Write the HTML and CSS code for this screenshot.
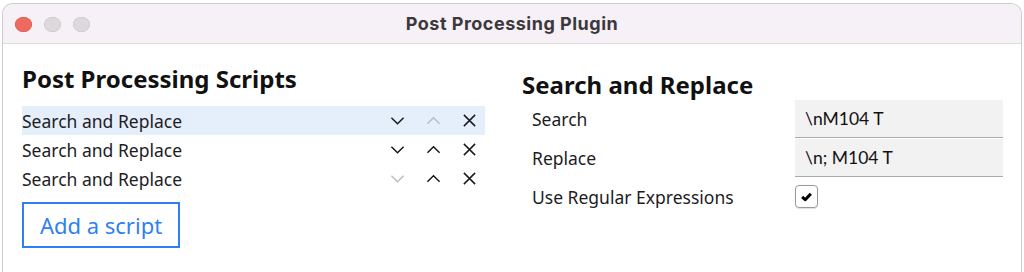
FILE: index.html
```html
<!DOCTYPE html>
<html>
<head>
<meta charset="utf-8">
<link rel="stylesheet" href="styles.css">
</head>
<body>
<div class="window">
  <div class="titlebar">
    <div class="lights">
      <span class="light red"></span>
      <span class="light"></span>
      <span class="light"></span>
    </div>
    <div class="title">Post Processing Plugin</div>
  </div>
  <div class="content">
    <div class="left">
      <h2 class="heading">Post Processing Scripts</h2>
      <div class="list">
        <div class="row selected">
          <span class="name">Search and Replace</span>
          <span class="actions">
            <svg class="ic" viewBox="0 0 16 16"><path d="M1.5 5l6.5 6.5 6.5-6.5"/></svg>
            <svg class="ic dis" viewBox="0 0 16 16"><path d="M1.5 11.5l6.5-6.5 6.5 6.5"/></svg>
            <svg class="ic" viewBox="0 0 16 16"><path d="M2 2l12 12M14 2L2 14"/></svg>
          </span>
        </div>
        <div class="row">
          <span class="name">Search and Replace</span>
          <span class="actions">
            <svg class="ic" viewBox="0 0 16 16"><path d="M1.5 5l6.5 6.5 6.5-6.5"/></svg>
            <svg class="ic" viewBox="0 0 16 16"><path d="M1.5 11.5l6.5-6.5 6.5 6.5"/></svg>
            <svg class="ic" viewBox="0 0 16 16"><path d="M2 2l12 12M14 2L2 14"/></svg>
          </span>
        </div>
        <div class="row">
          <span class="name">Search and Replace</span>
          <span class="actions">
            <svg class="ic dis" viewBox="0 0 16 16"><path d="M1.5 5l6.5 6.5 6.5-6.5"/></svg>
            <svg class="ic" viewBox="0 0 16 16"><path d="M1.5 11.5l6.5-6.5 6.5 6.5"/></svg>
            <svg class="ic" viewBox="0 0 16 16"><path d="M2 2l12 12M14 2L2 14"/></svg>
          </span>
        </div>
      </div>
      <button class="add">Add a script</button>
    </div>
    <div class="right">
      <h2 class="heading">Search and Replace</h2>
      <div class="form">
        <div class="field">
          <span class="label">Search</span>
          <div class="input">\nM104 T</div>
        </div>
        <div class="field">
          <span class="label">Replace</span>
          <div class="input">\n; M104 T</div>
        </div>
        <div class="field check-field">
          <span class="label">Use Regular Expressions</span>
          <span class="checkbox">
            <svg viewBox="0 0 12 12"><path d="M2 6.4l2.8 2.6 5.2-5.6"/></svg>
          </span>
        </div>
      </div>
    </div>
  </div>
</div>
</body>
</html>
```

FILE: styles.css
```css
html, body {
  margin: 0;
  padding: 0;
  background: #ffffff;
}
body {
  height: 272px;
  overflow: hidden;
  font-family: "Noto Sans", "Open Sans", sans-serif;
  color: #1d1d1f;
}
.window {
  margin: 3px 2px 0 2px;
  height: 269px;
  border: 1px solid #cfcbcf;
  border-bottom: none;
  border-radius: 11px 11px 0 0;
  overflow: hidden;
  background: #ffffff;
}
.titlebar {
  position: relative;
  height: 39px;
  background: #f6f1f6;
  border-bottom: 1px solid #dedade;
  display: flex;
  align-items: center;
  justify-content: center;
}
.lights {
  position: absolute;
  left: 12px;
  top: 13px;
  display: flex;
  gap: 12px;
}
.light {
  width: 17px;
  height: 15px;
  border-radius: 50%;
  background: #dcd8dc;
  box-shadow: inset 0 0 0 0.5px #c6c2c6;
}
.light.red {
  background: #ee6a5e;
  box-shadow: inset 0 0 0 0.5px #d9574c;
}
.title {
  font-family: "Inter", "Roboto", sans-serif;
  font-weight: 700;
  font-size: 18px;
  letter-spacing: 0.5px;
  color: #3c383c;
}
.content {
  display: grid;
  grid-template-columns: 463px 481px;
  column-gap: 37px;
  padding: 20px 0 0 19px;
}
.heading {
  margin: 0;
  font-size: 24px;
  font-weight: 700;
  line-height: 30px;
  color: #111;
}
.list {
  margin-top: 12px;
}
.row {
  height: 29px;
  display: flex;
  align-items: center;
  justify-content: space-between;
  font-size: 17.5px;
}
.row.selected {
  background: #e5eefb;
}
.actions {
  display: flex;
  gap: 21px;
  padding-right: 8px;
}
.ic {
  width: 15px;
  height: 15px;
  fill: none;
  stroke: #1a1a1a;
  stroke-width: 1.6;
}
.ic.dis {
  stroke: #bdbdbd;
}
.add {
  margin-top: 9px;
  height: 46px;
  width: 158px;
  background: #fff;
  border: 2px solid #2f7ff5;
  color: #2f7ff5;
  font-family: "Noto Sans", "Open Sans", sans-serif;
  font-size: 22px;
  padding: 0;
}
.right .heading {
  margin-top: 6px;
}
.form {
  padding-left: 10px;
  display: flex;
  flex-direction: column;
  gap: 1px;
}
.field {
  display: flex;
  align-items: center;
  height: 38px;
}
.label {
  width: 263px;
  font-size: 17.5px;
}
.input {
  box-sizing: border-box;
  width: 208px;
  height: 38px;
  background: #f2f2f2;
  border-bottom: 1px solid #ababab;
  display: flex;
  align-items: center;
  padding-left: 10px;
  font-family: "Lato", "Inter", sans-serif;
  font-size: 17.5px;
  color: #111;
}
.check-field {
  height: 23px;
  margin-top: 7px;
}
.checkbox {
  box-sizing: border-box;
  width: 23px;
  height: 23px;
  border: 1px solid #999;
  border-radius: 4px;
  box-shadow: 0 0.5px 1px rgba(0,0,0,0.12);
  display: flex;
  align-items: center;
  justify-content: center;
}
.checkbox svg {
  width: 13px;
  height: 13px;
  fill: none;
  stroke: #000;
  stroke-width: 2.8;
  stroke-linejoin: round;
}
```
